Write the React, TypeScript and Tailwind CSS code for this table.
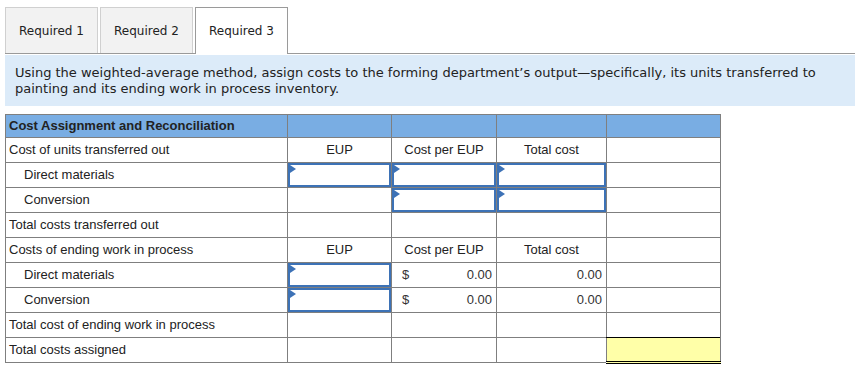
import React from "react";

const tabs = ["Required 1", "Required 2", "Required 3"];

const InputBox = () => (
  <div className="relative h-[24px] w-full border-2 border-[#3d72b6] bg-white">
    <span className="absolute left-0 top-0 h-0 w-0 border-y-[4px] border-l-[6px] border-y-transparent border-l-[#3d72b6]" />
  </div>
);

const Row = ({
  label,
  indent,
  cells,
}: {
  label: string;
  indent?: boolean;
  cells: React.ReactNode[];
}) => (
  <tr className="h-[25px]">
    <td
      className={`border border-[#7f7f7f] ${indent ? "pl-[18px]" : "pl-[3px]"} text-[13px] text-[#222]`}
    >
      {label}
    </td>
    {cells}
  </tr>
);

const td = "border border-[#7f7f7f] p-0 text-[13px] text-[#222]";

const App = () => {
  return (
    <div
      className="w-[855px] h-[373px] bg-white pt-[7px]"
      style={{ fontFamily: "'DejaVu Sans', Verdana, sans-serif" }}
    >
      {/* tabs */}
      <div className="ml-[5px] flex items-end gap-[2px] border-b border-[#9a9a9a]">
        {tabs.map((t, i) =>
          i === 2 ? (
            <div
              key={t}
              className="-mb-px flex h-[47px] w-[93px] items-center justify-center border border-b-0 border-[#9a9a9a] bg-white text-[12px] text-[#222]"
            >
              {t}
            </div>
          ) : (
            <div
              key={t}
              className="flex h-[46px] w-[93px] items-center justify-center border border-b-0 border-[#d0d0d0] bg-[#f2f2f2] text-[12px] text-[#222]"
            >
              {t}
            </div>
          )
        )}
      </div>

      <div className="ml-[5px] mt-[1px] h-[51px] bg-[#dcebf9] px-[10px] pt-[10px] text-[13px] leading-[16px] text-[#222]">
        Using the weighted-average method, assign costs to the forming department’s output—specifically, its units
        transferred to painting and its ending work in process inventory.
      </div>

      <table
        className="ml-[5px] mt-[8px] border-collapse"
        style={{ fontFamily: "'Liberation Sans', Arial, sans-serif" }}
      >
        <colgroup>
          <col className="w-[282px]" />
          <col className="w-[104px]" />
          <col className="w-[105px]" />
          <col className="w-[110px]" />
          <col className="w-[114px]" />
        </colgroup>
        <tbody>
          <tr className="h-[23px] bg-[#79ade3]">
            <td className="border border-[#7f7f7f] pl-[3px] text-[13px] font-bold text-[#222]">
              Cost Assignment and Reconciliation
            </td>
            <td className={td} />
            <td className={td} />
            <td className={td} />
            <td className={td} />
          </tr>
          <Row
            label="Cost of units transferred out"
            cells={[
              <td key="a" className={`${td} text-center`}>EUP</td>,
              <td key="b" className={`${td} text-center`}>Cost per EUP</td>,
              <td key="c" className={`${td} text-center`}>Total cost</td>,
              <td key="d" className={td} />,
            ]}
          />
          <Row
            label="Direct materials"
            indent
            cells={[
              <td key="a" className={td}><InputBox /></td>,
              <td key="b" className={td}><InputBox /></td>,
              <td key="c" className={td}><InputBox /></td>,
              <td key="d" className={td} />,
            ]}
          />
          <Row
            label="Conversion"
            indent
            cells={[
              <td key="a" className={td} />,
              <td key="b" className={td}><InputBox /></td>,
              <td key="c" className={td}><InputBox /></td>,
              <td key="d" className={td} />,
            ]}
          />
          <Row
            label="Total costs transferred out"
            cells={[
              <td key="a" className={td} />,
              <td key="b" className={td} />,
              <td key="c" className={`${td} border-t-black`} />,
              <td key="d" className={td} />,
            ]}
          />
          <Row
            label="Costs of ending work in process"
            cells={[
              <td key="a" className={`${td} text-center`}>EUP</td>,
              <td key="b" className={`${td} text-center`}>Cost per EUP</td>,
              <td key="c" className={`${td} text-center`}>Total cost</td>,
              <td key="d" className={td} />,
            ]}
          />
          {["Direct materials", "Conversion"].map((l) => (
            <Row
              key={l}
              label={l}
              indent
              cells={[
                <td key="a" className={td}><InputBox /></td>,
                <td key="b" className={td}>
                  <div className="flex justify-between pl-[10px] pr-[4px] text-[#333]">
                    <span>$</span>
                    <span>0.00</span>
                  </div>
                </td>,
                <td key="c" className={`${td} pr-[4px] text-right text-[#333]`}>0.00</td>,
                <td key="d" className={td} />,
              ]}
            />
          ))}
          <Row
            label="Total cost of ending work in process"
            cells={[
              <td key="a" className={td} />,
              <td key="b" className={td} />,
              <td key="c" className={`${td} border-t-black`} />,
              <td key="d" className={td} />,
            ]}
          />
          <Row
            label="Total costs assigned"
            cells={[
              <td key="a" className={td} />,
              <td key="b" className={td} />,
              <td key="c" className={td} />,
              <td key="d" className={`${td} border-t-black border-b-[3px] border-b-black border-double bg-[#ffffa8]`} />,
            ]}
          />
        </tbody>
      </table>
    </div>
  );
};

export default App;
